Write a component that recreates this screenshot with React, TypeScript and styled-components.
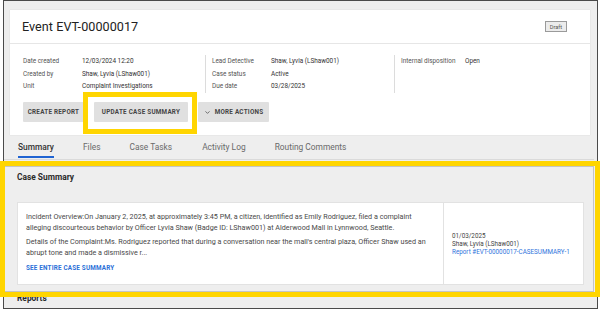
import React from "react";
import styled, { createGlobalStyle } from "styled-components";
import { ChevronDown } from "lucide-react";

const GlobalStyle = createGlobalStyle`
  html, body { margin: 0; padding: 0; background: #ffffff; }
  body { font-family: Roboto, "Noto Sans", "Liberation Sans", sans-serif; }
  * { box-sizing: border-box; }
`;

const Page = styled.div`
  position: relative;
  width: 600px;
  height: 311px;
  overflow: hidden;
  background: #ffffff;
`;

const Frame = styled.div`
  margin-left: 3px;
  width: 595px;
  height: 309px;
  border: 1px solid #4a4a4a;
  background: #eeeeee;
  overflow: hidden;
  padding-top: 9px;
`;

const Card = styled.div`
  margin-left: 6px;
  width: 580px;
  height: 125px;
  background: #ffffff;
  box-shadow: 0 0 1px rgba(0, 0, 0, 0.15);
  display: flex;
  flex-direction: column;
`;

const CardHeader = styled.div`
  height: 34px;
  padding: 0 23px 0 12px;
  display: flex;
  align-items: center;
  justify-content: space-between;
  border-bottom: 1px solid #e6e6e6;
`;

const Title = styled.h1`
  margin: 0;
  font-size: 12.6px;
  font-weight: 400;
  color: #222222;
  letter-spacing: 0.05px;
`;

const Badge = styled.span`
  display: inline-flex;
  align-items: center;
  justify-content: center;
  width: 22px;
  height: 11px;
  border: 1px solid #9a9a9a;
  background: #ececec;
  font-size: 5.6px;
  color: #555555;
`;

const Details = styled.div`
  display: grid;
  grid-template-columns: 182px 189px 1fr;
  padding: 11px 0 0 13px;
`;

const DetailCol = styled.div<{ $divider?: boolean; $labelWidth: number }>`
  display: grid;
  grid-template-columns: ${(p) => p.$labelWidth}px 1fr;
  grid-auto-rows: 12.5px;
  align-items: center;
  padding-left: ${(p) => (p.$divider ? "6px" : "0")};
  border-left: ${(p) => (p.$divider ? "1px solid #dcdcdc" : "none")};
  height: 37.5px;
`;

const Label = styled.span`
  font-size: 6.4px;
  color: #555555;
  white-space: nowrap;
`;

const Value = styled.span`
  font-size: 6.4px;
  color: #333333;
  white-space: nowrap;
`;

const Actions = styled.div`
  display: flex;
  gap: 10px;
  padding: 9.5px 0 0 13px;
`;

const ActionButton = styled.button<{ $w: number }>`
  display: inline-flex;
  align-items: center;
  justify-content: center;
  gap: 4px;
  width: ${(p) => p.$w}px;
  height: 20px;
  border: none;
  border-radius: 1px;
  background: #e0e0e0;
  color: #444444;
  font-family: Roboto, sans-serif;
  font-size: 6.3px;
  font-weight: 700;
  letter-spacing: 0.25px;
  padding: 0;
`;

const TabBar = styled.div`
  display: flex;
  height: 25px;
  margin: 0 3px 0 0;
  padding-left: 14px;
  border-bottom: 1px solid #dadada;
`;

const Tab = styled.div<{ $active?: boolean; $ml: number }>`
  margin-left: ${(p) => p.$ml}px;
  display: flex;
  align-items: center;
  height: 23px;
  padding-top: 2px;
  font-size: 8.4px;
  font-weight: ${(p) => (p.$active ? 500 : 400)};
  color: ${(p) => (p.$active ? "#333333" : "#6a6a6a")};
  border-bottom: 2px solid ${(p) => (p.$active ? "#1f63d2" : "transparent")};
  white-space: nowrap;
`;

const Panel = styled.section`
  margin-top: 6px;
  width: 590px;
  height: 126px;
  border: 1px solid #c4c4c4;
  background: #eeeeee;
  padding: 4px 9px 0 12px;
`;

const SectionTitle = styled.h2`
  margin: 0;
  height: 13px;
  line-height: 13px;
  font-size: 8.4px;
  font-weight: 700;
  color: #2a2a2a;
`;

const SummaryCard = styled.div`
  margin-top: 18px;
  height: 83px;
  background: #ffffff;
  border: 1px solid #e2e2e2;
  display: flex;
`;

const SummaryBody = styled.div`
  width: 426px;
  padding: 8px 6px 0 8px;
  border-right: 1px solid #e2e2e2;
`;

const Para = styled.p`
  margin: 0 0 3px 0;
  font-size: 7.2px;
  line-height: 11px;
  color: #484848;
`;

const Link = styled.a`
  display: block;
  margin-top: 5px;
  font-size: 6.3px;
  font-weight: 700;
  letter-spacing: 0.2px;
  line-height: 11px;
  color: #2a6fd8;
`;

const Meta = styled.div`
  flex: 1;
  display: flex;
  flex-direction: column;
  justify-content: center;
  padding-left: 8px;
`;

const MetaLine = styled.span<{ $link?: boolean }>`
  font-size: 6.3px;
  line-height: 8px;
  color: ${(p) => (p.$link ? "#2f74dc" : "#444444")};
  white-space: nowrap;
`;

const NextTitle = styled(SectionTitle)`
  margin: 0 0 0 13px;
`;

const Highlight = styled.div<{ $x: number; $y: number; $w: number; $h: number }>`
  position: absolute;
  left: ${(p) => p.$x}px;
  top: ${(p) => p.$y}px;
  width: ${(p) => p.$w}px;
  height: ${(p) => p.$h}px;
  border: 5px solid #ffd500;
  pointer-events: none;
`;

const details = [
  {
    labelWidth: 59,
    rows: [
      ["Date created", "12/03/2024 12:20"],
      ["Created by", "Shaw, Lyvia (LShaw001)"],
      ["Unit", "Complaint Investigations"],
    ],
  },
  {
    labelWidth: 59,
    rows: [
      ["Lead Detective", "Shaw, Lyvia (LShaw001)"],
      ["Case status", "Active"],
      ["Due date", "03/28/2025"],
    ],
  },
  {
    labelWidth: 64,
    rows: [["Internal disposition", "Open"]],
  },
];

const tabs = [
  { label: "Summary", ml: 0, active: true },
  { label: "Files", ml: 29 },
  { label: "Case Tasks", ml: 29 },
  { label: "Activity Log", ml: 30 },
  { label: "Routing Comments", ml: 29 },
];

export default function App() {
  return (
    <Page>
      <GlobalStyle />
      <Frame>
        <Card>
          <CardHeader>
            <Title>Event EVT-00000017</Title>
            <Badge>Draft</Badge>
          </CardHeader>
          <Details>
            {details.map((col, i) => (
              <DetailCol key={i} $divider={i > 0} $labelWidth={col.labelWidth}>
                {col.rows.map(([l, v]) => (
                  <React.Fragment key={l}>
                    <Label>{l}</Label>
                    <Value>{v}</Value>
                  </React.Fragment>
                ))}
              </DetailCol>
            ))}
          </Details>
          <Actions>
            <ActionButton $w={61}>CREATE REPORT</ActionButton>
            <ActionButton $w={94}>UPDATE CASE SUMMARY</ActionButton>
            <ActionButton $w={71}>
              <ChevronDown size={7} strokeWidth={2.5} />
              MORE ACTIONS
            </ActionButton>
          </Actions>
        </Card>
        <TabBar>
          {tabs.map((t) => (
            <Tab key={t.label} $active={t.active} $ml={t.ml}>
              {t.label}
            </Tab>
          ))}
        </TabBar>
        <Panel>
          <SectionTitle>Case Summary</SectionTitle>
          <SummaryCard>
            <SummaryBody>
              <Para>
                Incident Overview:On January 2, 2025, at approximately 3:45 PM, a citizen, identified as Emily Rodriguez, filed a complaint alleging discourteous behavior by Officer Lyvia Shaw (Badge ID: LShaw001) at Alderwood Mall in Lynnwood, Seattle.
              </Para>
              <Para>
                Details of the Complaint:Ms. Rodriguez reported that during a conversation near the mall's central plaza, Officer Shaw used an abrupt tone and made a dismissive r...
              </Para>
              <Link>SEE ENTIRE CASE SUMMARY</Link>
            </SummaryBody>
            <Meta>
              <MetaLine>01/03/2025</MetaLine>
              <MetaLine>Shaw, Lyvia (LShaw001)</MetaLine>
              <MetaLine $link>Report #EVT-00000017-CASESUMMARY-1</MetaLine>
            </Meta>
          </SummaryCard>
        </Panel>
        <NextTitle>Reports</NextTitle>
      </Frame>
      <Highlight $x={83} $y={92} $w={114} $h={42} />
      <Highlight $x={0} $y={161} $w={600} $h={136} />
    </Page>
  );
}
